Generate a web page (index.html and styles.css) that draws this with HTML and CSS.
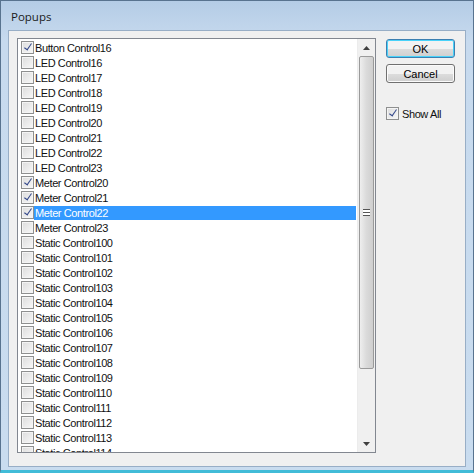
FILE: index.html
```html
<!DOCTYPE html>
<html lang="en">
<head>
    <meta charset="UTF-8">
    <title>Popups</title>
    <link rel="stylesheet" href="styles.css">
</head>
<body>
    <div class="window">
        <div class="titlebar">Popups</div>
        <div class="client">
            <div class="listbox">
                <div class="items">
                    <div class="row"><span class="box on"></span><span class="label">Button Control16</span></div>
                    <div class="row"><span class="box"></span><span class="label">LED Control16</span></div>
                    <div class="row"><span class="box"></span><span class="label">LED Control17</span></div>
                    <div class="row"><span class="box"></span><span class="label">LED Control18</span></div>
                    <div class="row"><span class="box"></span><span class="label">LED Control19</span></div>
                    <div class="row"><span class="box"></span><span class="label">LED Control20</span></div>
                    <div class="row"><span class="box"></span><span class="label">LED Control21</span></div>
                    <div class="row"><span class="box"></span><span class="label">LED Control22</span></div>
                    <div class="row"><span class="box"></span><span class="label">LED Control23</span></div>
                    <div class="row"><span class="box on"></span><span class="label">Meter Control20</span></div>
                    <div class="row"><span class="box on"></span><span class="label">Meter Control21</span></div>
                    <div class="row"><span class="box on"></span><span class="label selected">Meter Control22</span></div>
                    <div class="row"><span class="box"></span><span class="label">Meter Control23</span></div>
                    <div class="row"><span class="box"></span><span class="label">Static Control100</span></div>
                    <div class="row"><span class="box"></span><span class="label">Static Control101</span></div>
                    <div class="row"><span class="box"></span><span class="label">Static Control102</span></div>
                    <div class="row"><span class="box"></span><span class="label">Static Control103</span></div>
                    <div class="row"><span class="box"></span><span class="label">Static Control104</span></div>
                    <div class="row"><span class="box"></span><span class="label">Static Control105</span></div>
                    <div class="row"><span class="box"></span><span class="label">Static Control106</span></div>
                    <div class="row"><span class="box"></span><span class="label">Static Control107</span></div>
                    <div class="row"><span class="box"></span><span class="label">Static Control108</span></div>
                    <div class="row"><span class="box"></span><span class="label">Static Control109</span></div>
                    <div class="row"><span class="box"></span><span class="label">Static Control110</span></div>
                    <div class="row"><span class="box"></span><span class="label">Static Control111</span></div>
                    <div class="row"><span class="box"></span><span class="label">Static Control112</span></div>
                    <div class="row"><span class="box"></span><span class="label">Static Control113</span></div>
                    <div class="row"><span class="box"></span><span class="label">Static Control114</span></div>
                </div>
                <div class="scrollbar">
                    <div class="arrow"><svg width="7" height="4" viewBox="0 0 7 4"><path d="M0 4 L3.5 0 L7 4 Z" fill="#404040"/></svg></div>
                    <div class="thumb"><span class="grip"></span></div>
                    <div class="track"></div>
                    <div class="arrow"><svg width="7" height="4" viewBox="0 0 7 4"><path d="M0 0 L7 0 L3.5 4 Z" fill="#404040"/></svg></div>
                </div>
            </div>
            <div class="side">
                <button class="btn default">OK</button>
                <button class="btn">Cancel</button>
                <div class="showall"><span class="box on"></span><span>Show All</span></div>
            </div>
        </div>
    </div>
</body>
</html>
```

FILE: styles.css
```css
body {
    margin: 0;
    font-family: "Liberation Sans", Arial, sans-serif;
    font-size: 11px;
    letter-spacing: -0.4px;
    color: #111;
}
.window {
    width: 474px;
    height: 473px;
    box-sizing: border-box;
    border: 1px solid #58738f;
    border-bottom: 3px solid #41bcd8;
    background: linear-gradient(#b4cce6, #c7daee 40px, #c9dcef);
    display: flex;
    flex-direction: column;
    padding: 0 7px 3px 7px;
}
.titlebar {
    height: 29px;
    line-height: 32px;
    padding-left: 3px;
    font-family: "Open Sans", "Liberation Sans", sans-serif;
    font-size: 11.5px;
    letter-spacing: 0;
    color: #1b1b1b;
}
.client {
    flex: 1;
    background: #f0f0f0;
    border: 1px solid #98aec6;
    display: flex;
    padding: 7px 0 0 8px;
    gap: 10px;
    overflow: hidden;
}
.listbox {
    width: 359px;
    height: 415px;
    box-sizing: border-box;
    border: 1px solid #828790;
    background: #fff;
    display: flex;
}
.items {
    flex: 1;
    padding-top: 1px;
    overflow: hidden;
}
.row {
    height: 15px;
    display: flex;
    align-items: center;
    padding-left: 3px;
}
.box {
    width: 11px;
    height: 11px;
    border: 1px solid #8e8f8f;
    background: linear-gradient(135deg, #dcdcdc, #f8f8f8);
    box-shadow: inset 0 0 0 1px #f4f4f4;
    flex: none;
    position: relative;
}
.box.on::after {
    content: "";
    position: absolute;
    left: 4px;
    top: 0px;
    width: 3px;
    height: 7px;
    border: solid #34488a;
    border-width: 0 1.5px 1.5px 0;
    transform: rotate(35deg);
}
.label {
    flex: 1;
    height: 14px;
    line-height: 14px;
    padding-left: 1px;
    margin-right: 1px;
    white-space: nowrap;
}
.label.selected {
    background: #3399ff;
    color: #fff;
}
.scrollbar {
    width: 17px;
    display: flex;
    flex-direction: column;
    background: #f0f0f0;
    border-left: 1px solid #ececec;
}
.arrow {
    height: 17px;
    display: flex;
    align-items: center;
    justify-content: center;
}
.thumb {
    height: 311px;
    margin: 0 1px;
    border: 1px solid #9a9a9a;
    border-radius: 2px;
    background: linear-gradient(90deg, #eeeeee, #dadada 50%, #cfcfcf);
    display: flex;
    align-items: center;
    justify-content: center;
}
.grip {
    width: 7px;
    height: 5px;
    border-top: 1px solid #555;
    border-bottom: 1px solid #555;
    background: linear-gradient(#fff 0 2px, #555 2px 3px, #fff 3px);
}
.track {
    flex: 1;
}
.side {
    display: flex;
    flex-direction: column;
    padding-top: 1px;
}
.btn {
    width: 69px;
    height: 19px;
    margin-bottom: 6px;
    padding: 0;
    font-family: "Liberation Sans", Arial, sans-serif;
    font-size: 11px;
    color: #000;
    border: 1px solid #707070;
    border-radius: 3px;
    background: linear-gradient(#f2f2f2 50%, #dddddd 50%, #cfcfcf);
    box-shadow: inset 0 0 0 1px #fbfbfb;
}
.btn.default {
    border-color: #3c7fb1;
    box-shadow: inset 0 0 0 1px #48d2f9;
}
.showall {
    display: flex;
    align-items: center;
    gap: 3px;
    margin-top: 18px;
}
```
